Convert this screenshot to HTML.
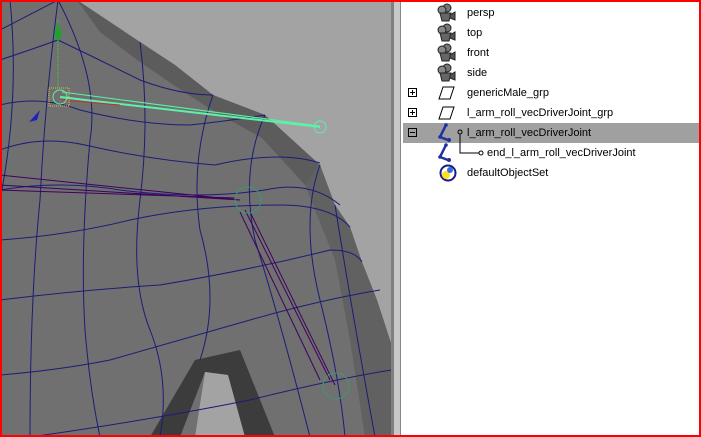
<!DOCTYPE html>
<html><head><style>
body{margin:0;width:701px;height:437px;overflow:hidden;background:#fff;font-family:"Liberation Sans",Arial,sans-serif}
#f{position:absolute;left:0;top:0;width:697px;height:433px;border:2px solid #f00;overflow:hidden}
.r{position:absolute;left:401px;width:296px;height:20px;font-size:11px;line-height:20px;color:#000}
.t{position:absolute;left:64px}
.pm{position:absolute;left:5px;top:5px;width:9px;height:9px;border:1px solid #000;box-sizing:border-box;font-size:0}
.pm:before{content:"";position:absolute;left:1px;top:3px;width:5px;height:1px;background:#000}
.pm.p:after{content:"";position:absolute;left:3px;top:1px;width:1px;height:5px;background:#000}
.ic{position:absolute;left:33px;top:0}
</style></head><body><div id="f">
<svg width="401" height="437" style="position:absolute;left:-2px;top:-2px">
<rect width="401" height="437" fill="#a3a3a3"/>
<polygon points="0,0 77,0 110,22 140,42 175,65 213,95 265,115 320,165 335,205 350,227 362,262 377,300 391,343 391,437 0,437" fill="#707070"/>
<polygon points="77,0 110,22 140,42 175,65 213,95 265,115 320,165 305,185 262,138 215,112 178,88 140,62 100,32" fill="#5c5c5c"/>
<polygon points="320,165 335,205 350,227 362,262 377,300 391,343 391,437 365,437 350,340 335,260 305,185" fill="#616161"/>
<polygon points="195,360 240,350 275,437 240,437 228,375 205,372 180,437 150,437" fill="#3c3c3c"/>
<polygon points="205,372 228,375 245,437 195,437" fill="#a3a3a3"/>
<g stroke="#1c1c78" stroke-width="1" fill="none">
<path d="M0,150 Q40,135 85,145 Q150,160 215,165 Q280,150 320,163"/>
<path d="M0,190 Q60,180 120,190 Q200,200 265,190 Q310,180 340,205"/>
<path d="M0,240 Q70,235 130,220 Q200,205 280,205 Q330,205 350,227"/>
<path d="M0,300 Q80,290 160,285 Q250,270 330,250 Q355,250 362,262"/>
<path d="M0,375 Q60,370 110,360 Q180,340 250,320 Q320,300 380,290"/>
<path d="M30,437 Q150,420 250,400 Q330,380 391,370"/>
<path d="M0,60 Q30,50 58,40 Q100,60 140,80 Q180,95 213,95"/>
<path d="M0,105 Q40,95 80,110 Q140,125 190,125 Q235,120 265,115"/>
<path d="M10,0 Q20,100 0,200"/>
<path d="M58,0 Q45,100 40,200 Q30,300 30,437"/>
<path d="M58,0 Q100,80 90,140 Q80,250 85,330 Q90,390 100,437"/>
<path d="M140,42 Q150,120 140,200 Q130,280 150,330 Q170,380 160,437"/>
<path d="M213,95 Q190,160 200,230 Q220,300 200,360"/>
<path d="M265,115 Q240,170 255,240 Q280,320 310,437"/>
<path d="M320,165 Q300,220 320,300 Q340,380 345,437"/>
<path d="M335,205 Q350,300 375,437"/>
<path d="M58,0 L0,30 M58,0 L30,0"/>
</g>
<line x1="60" y1="97" x2="320" y2="127" stroke="#5cf2a8" stroke-width="2"/>
<line x1="62" y1="92" x2="320" y2="126" stroke="#5cf2a8" stroke-width="1"/>
<line x1="62" y1="100" x2="120" y2="105" stroke="#c03030" stroke-width="1"/>
<circle cx="60" cy="97" r="7" stroke="#5cf2a8" fill="none"/>
<rect x="49" y="88" width="20" height="18" stroke="#e0c040" stroke-dasharray="1,1" fill="none"/>
<circle cx="320" cy="127" r="6" stroke="#5cf2a8" fill="none"/>
<line x1="58" y1="20" x2="58" y2="88" stroke="#40d040" stroke-dasharray="1,1"/>
<path d="M58,22 L62,35 L58,42 L54,35Z" fill="#20a030"/>
<path d="M29,122 L40,110 L37,120Z" fill="#2020c0"/>
<g stroke="#400060" fill="none"><path d="M0,175 L240,200 M0,185 L240,200 M0,190 L235,198 M245,210 L330,380 M250,212 L335,385 M240,212 L320,380"/></g>
<circle cx="248" cy="200" r="13" stroke="#3a9a70" fill="none"/>
<circle cx="336" cy="386" r="13" stroke="#3a9a70" fill="none"/>
<rect x="391" y="0" width="12" height="437" fill="#c8c8c8"/>
<rect x="391" y="0" width="3" height="437" fill="#808080"/>
<rect x="400" y="0" width="3" height="437" fill="#888"/>
</svg>
<svg width="0" height="0" style="position:absolute"><defs>
<g id="cam"><circle cx="11" cy="5" r="4" fill="#777" stroke="#222"/><circle cx="6" cy="7" r="4" fill="#888" stroke="#222"/><path d="M4,10H15L13,18H6Z" fill="#666" stroke="#222"/><path d="M14,12L19,9V17L14,15Z" fill="#555" stroke="#222"/></g>
<g id="jt"><path d="M10,2L4,14L12,17" stroke="#2030a0" stroke-width="2.5" fill="none"/><circle cx="10" cy="2" r="1.8" fill="#2030a0"/><circle cx="4" cy="14" r="1.8" fill="#2030a0"/><circle cx="13" cy="17" r="2" fill="#2030a0"/></g>
</defs></svg>
<div class="r" style="top:1px"><svg class="ic" width="22" height="20"><use href="#cam"/></svg><span class="t">persp</span></div>
<div class="r" style="top:21px"><svg class="ic" width="22" height="20"><use href="#cam"/></svg><span class="t">top</span></div>
<div class="r" style="top:41px"><svg class="ic" width="22" height="20"><use href="#cam"/></svg><span class="t">front</span></div>
<div class="r" style="top:61px"><svg class="ic" width="22" height="20"><use href="#cam"/></svg><span class="t">side</span></div>
<div class="r" style="top:81px"><span class="pm p"></span><svg style="position:absolute;left:35px;top:3px" width="18" height="14"><path d="M5,1H16L12,13H1Z" fill="none" stroke="#000"/></svg><span class="t">genericMale_grp</span></div>
<div class="r" style="top:101px"><span class="pm p"></span><svg style="position:absolute;left:35px;top:3px" width="18" height="14"><path d="M5,1H16L12,13H1Z" fill="none" stroke="#000"/></svg><span class="t">l_arm_roll_vecDriverJoint_grp</span></div>
<div class="r" style="top:121px;background:#a0a0a0"><span class="pm"></span><svg style="position:absolute;left:33px;top:0" width="30" height="20"><use href="#jt"/><circle cx="24" cy="9" r="2" stroke="#000" fill="none"/><path d="M24,11V20" stroke="#000"/></svg><span class="t">l_arm_roll_vecDriverJoint</span></div>
<div class="r" style="top:141px"><svg style="position:absolute;left:33px;top:0" width="80" height="20"><use href="#jt"/><path d="M24,0V10H43" stroke="#000" fill="none"/><circle cx="45" cy="10" r="2" stroke="#000" fill="none"/></svg><span class="t" style="left:84px">end_l_arm_roll_vecDriverJoint</span></div>
<div class="r" style="top:161px"><svg style="position:absolute;left:36px;top:1px" width="18" height="18"><circle cx="9" cy="9" r="7.5" fill="#fff" stroke="#1a1a80" stroke-width="2"/><circle cx="7" cy="11" r="4" fill="#ffe020"/><circle cx="11" cy="6" r="3" fill="#3070e0"/></svg><span class="t">defaultObjectSet</span></div>
</div></body></html>
